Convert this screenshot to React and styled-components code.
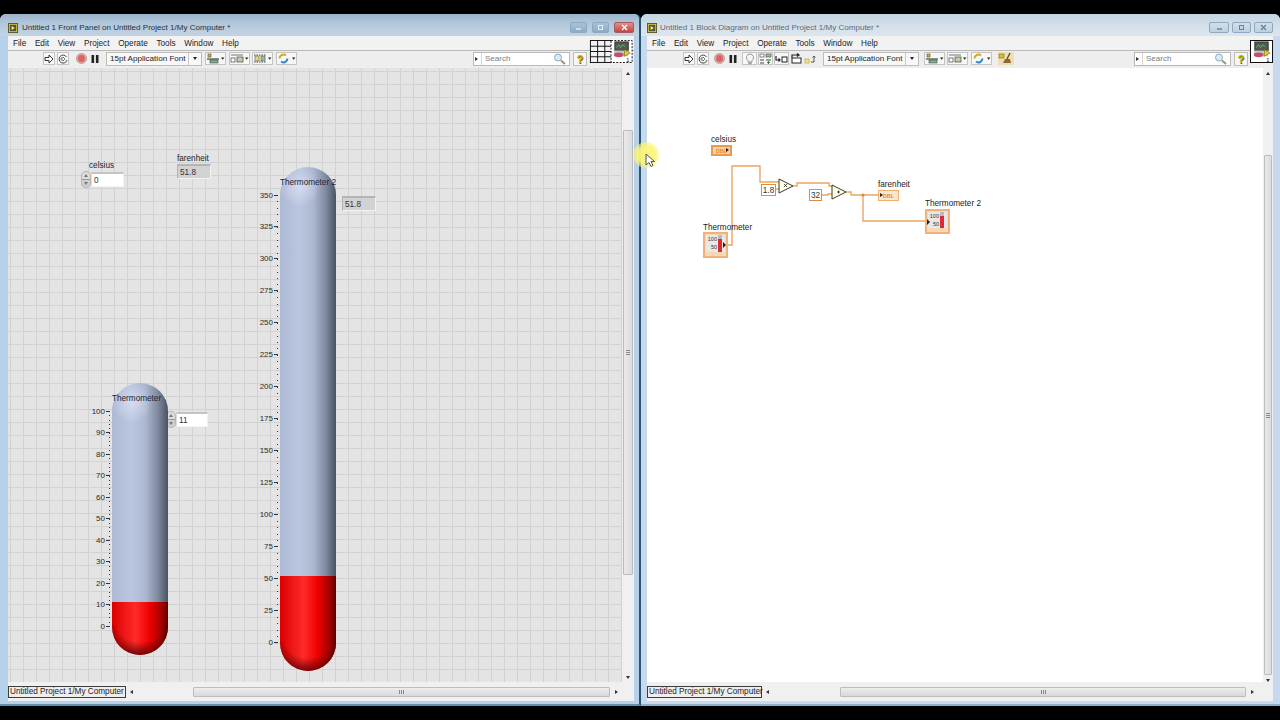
import styled, { createGlobalStyle } from 'styled-components'

const Global = createGlobalStyle`
  html, body {
    margin: 0;
    background: #000;
  }
  body {
    font-family: "Liberation Sans", Arial, sans-serif;
    overflow: hidden;
  }
`

const Screen = styled.div`
  position: relative;
  width: 1280px;
  height: 720px;
  padding: 14px 0;
  box-sizing: border-box;
  background: #000;
  display: flex;
`

const Win = styled.div`
  position: relative;
  width: ${(p) => p.$w}px;
  display: flex;
  flex-direction: column;
  box-sizing: border-box;
  padding: 0 ${(p) => p.$pr}px 3px ${(p) => p.$pl}px;
  border-radius: 6px 6px 0 0;
  border-right: ${(p) => (p.$active ? '2px solid #2c566f' : '0')};
  border-bottom: 2px solid ${(p) => (p.$active ? '#5f93ad' : '#8db0c8')};
  background: ${(p) => (p.$active ? '#b6d2ea' : '#c6d9ee')};
`

const TitleBar = styled.div`
  height: 22px;
  margin: 0 -${(p) => p.$pr}px 0 -${(p) => p.$pl}px;
  padding: 5px ${(p) => p.$pr}px 0 ${(p) => p.$pl}px;
  box-sizing: border-box;
  display: flex;
  align-items: center;
  border-radius: 6px 6px 0 0;
  background: ${(p) =>
    p.$active
      ? 'linear-gradient(#9bb4cb, #b3c8dc 45%, #c2d3e3)'
      : 'linear-gradient(#c3d3e1, #d2dfea 50%, #dce6ee)'};
`

const TitleText = styled.span`
  margin-left: ${(p) => (p.$active ? 4 : 3)}px;
  font-size: 8.05px;
  white-space: nowrap;
  color: ${(p) => (p.$active ? '#26303a' : '#5d6b78')};
`

const WinButtons = styled.div`
  margin-left: auto;
  display: flex;
  gap: ${(p) => (p.$active ? 5 : 3)}px;
`

const WinButton = styled.div`
  width: ${(p) => p.$w}px;
  height: 11px;
  display: flex;
  align-items: center;
  justify-content: center;
  box-sizing: border-box;
  border: 1px solid ${(p) => (p.$close && p.$active ? '#a85a5a' : '#8ea8bf')};
  border-radius: 2px;
  background: ${(p) =>
    p.$close && p.$active
      ? 'linear-gradient(#e0908c, #c8443f)'
      : p.$active
        ? 'linear-gradient(#a9c2d9, #8dabc6)'
        : 'linear-gradient(#d0deea, #bfd1e0)'};
`

const MenuBar = styled.div`
  height: 14px;
  display: flex;
  align-items: center;
  padding-left: 5px;
  gap: 8.7px;
  background: #f2f2f2;
  font-size: 8.2px;
  color: #1c1c1c;
`

const Toolbar = styled.div`
  height: 18px;
  display: flex;
  align-items: center;
  box-sizing: border-box;
  border-top: 1px solid #b9b9b9;
  padding-bottom: 2px;
  background: #eeeeee;
`

const ToolBtn = styled.div`
  width: ${(p) => p.$w || 12}px;
  height: 13px;
  margin-left: ${(p) => p.$ml || 0}px;
  flex: none;
  display: flex;
  align-items: center;
  justify-content: center;
  box-sizing: border-box;
  background: ${(p) => (p.$plain ? 'transparent' : '#f7f7f7')};
  border: ${(p) => (p.$plain ? '0' : '1px solid #c4c4c4')};
`

const FontRing = styled.div`
  width: ${(p) => p.$w}px;
  height: 14px;
  margin-left: ${(p) => p.$ml}px;
  flex: none;
  display: flex;
  align-items: center;
  box-sizing: border-box;
  border: 1px solid #bcbcbc;
  background: #f8f8f8;
  padding-left: 3px;
  font-size: 8.1px;
  color: #222;
  white-space: nowrap;
`

const RingArrow = styled.span`
  margin-left: auto;
  width: 12px;
  height: 100%;
  border-left: 1px solid #c8c8c8;
  display: flex;
  align-items: center;
  justify-content: center;
  &::after {
    content: '';
    border: 2.5px solid transparent;
    border-top: 3px solid #222;
    border-bottom: 0;
  }
`

const SearchBox = styled.div`
  width: 97px;
  height: 14px;
  margin-left: ${(p) => p.$ml}px;
  flex: none;
  display: flex;
  align-items: center;
  box-sizing: border-box;
  border: 1px solid #b8b8b8;
  background: #fff;
  font-size: 8px;
  color: #7a7a7a;
`

const SearchMark = styled.span`
  width: 6px;
  height: 100%;
  margin: 0 3px 0 1px;
  border-right: 1px solid #d4d4d4;
  display: flex;
  align-items: center;
  &::after {
    content: '';
    border: 2px solid transparent;
    border-left: 3px solid #333;
    border-right: 0;
  }
`

const SearchIcon = styled.svg`
  margin-left: auto;
  margin-right: 3px;
`

const HelpBtn = styled.div`
  width: 14px;
  height: 14px;
  margin-left: 3px;
  flex: none;
  display: flex;
  align-items: center;
  justify-content: center;
  box-sizing: border-box;
  border: 1px solid #bdbdbd;
  background: #f6f6f6;
  font: bold 11px "Liberation Sans", sans-serif;
  color: #c9b100;
  text-shadow: 0.5px 0.5px 0 #5b5200;
`

const Body = styled.div`
  flex: 1;
  display: flex;
  min-height: 0;
`

const Canvas = styled.div`
  position: relative;
  flex: 1;
  overflow: hidden;
  background-color: ${(p) => (p.$grid ? '#e4e4e4' : '#fff')};
  background-image: ${(p) =>
    p.$grid
      ? 'linear-gradient(#d2d2d2 1px, transparent 1px), linear-gradient(90deg, #d2d2d2 1px, transparent 1px)'
      : 'none'};
  background-size: 13px 13px;
  background-position: 2px 3px;
`

const VScroll = styled.div`
  width: ${(p) => p.$w}px;
  flex: none;
  display: flex;
  flex-direction: column;
  align-items: stretch;
  background: #f0f0f0;
`

const ScrollUp = styled.div`
  height: 10px;
  flex: none;
  display: flex;
  align-items: center;
  justify-content: center;
  &::after {
    content: '';
    border: 2.5px solid transparent;
    border-bottom: 3px solid #333;
    border-top: 0;
  }
`

const ScrollDown = styled(ScrollUp)`
  margin-top: auto;
  &::after {
    border-top: 3px solid #333;
    border-bottom: 0;
  }
`

const VThumb = styled.div`
  margin: ${(p) => p.$top}px 1px 0;
  height: ${(p) => p.$h}px;
  flex: none;
  border: 1px solid #bbb;
  border-radius: 1px;
  box-sizing: border-box;
  background: linear-gradient(90deg, #e9e9e9, #dcdcdc);
  display: flex;
  align-items: center;
  justify-content: center;
  &::after {
    content: '';
    width: 4px;
    height: 5px;
    background: repeating-linear-gradient(#888 0 1px, transparent 1px 2px);
  }
`

const StatusBar = styled.div`
  height: 19px;
  display: flex;
  align-items: center;
  background: #f0f0f0;
`

const ContextLabel = styled.div`
  width: ${(p) => p.$w}px;
  height: 12px;
  flex: none;
  box-sizing: border-box;
  display: flex;
  align-items: center;
  padding-left: 1px;
  border: 1px solid #3c3c3c;
  background: #eee;
  font-size: 8.2px;
  color: #222;
  white-space: nowrap;
`

const HArrow = styled.div`
  flex: none;
  margin-left: ${(p) => p.$ml}px;
  border: 2.5px solid transparent;
  border-${(p) => (p.$dir === 'left' ? 'right' : 'left')}: 3px solid #333;
  border-${(p) => (p.$dir === 'left' ? 'left' : 'right')}: 0;
`

const HThumb = styled.div`
  width: ${(p) => p.$w}px;
  height: 10px;
  margin-left: ${(p) => p.$ml}px;
  flex: none;
  box-sizing: border-box;
  border: 1px solid #bdbdbd;
  border-radius: 1px;
  background: linear-gradient(#ededed, #d9d9d9);
  display: flex;
  align-items: center;
  justify-content: center;
  &::after {
    content: '';
    width: 5px;
    height: 4px;
    background: repeating-linear-gradient(90deg, #888 0 1px, transparent 1px 2px);
  }
`

const PaneSlot = styled.div`
  position: absolute;
  top: 26px;
  right: ${(p) => p.$right}px;
`

const BlockSvg = styled.svg`
  display: block;
`

/* front panel parts, placed freely on the canvas */
const Item = styled.div`
  position: absolute;
  left: ${(p) => p.$x}px;
  top: ${(p) => p.$y}px;
`

const Caption = styled.div`
  padding-top: 1px;
  font-size: 8.2px;
  line-height: 10px;
  color: #222;
  white-space: nowrap;
`

const NumRow = styled.div`
  display: flex;
  align-items: center;
`

const Spinner = styled.div`
  width: 10px;
  height: 17px;
  flex: none;
  border-radius: 5px;
  background: linear-gradient(#dcdcdc 48%, #999 50%, #cfcfcf 52%);
  box-shadow: inset 0 0 0 1px #b5b5b5;
  display: flex;
  flex-direction: column;
  align-items: center;
  justify-content: space-around;
  &::before, &::after {
    content: '';
    border: 2px solid transparent;
  }
  &::before {
    border-bottom: 3px solid #777;
    border-top: 0;
  }
  &::after {
    border-top: 3px solid #777;
    border-bottom: 0;
  }
`

const NumBox = styled.div`
  width: ${(p) => p.$w || 33}px;
  height: 15px;
  box-sizing: border-box;
  padding-left: 2px;
  display: flex;
  align-items: center;
  font-size: 8.2px;
  color: #333;
  background: ${(p) => (p.$readonly ? '#d2d2d2' : '#fff')};
  border-top: 2px solid ${(p) => (p.$readonly ? '#b4b4b4' : '#c4c4c4')};
  border-left: 1px solid ${(p) => (p.$readonly ? '#b4b4b4' : '#dcdcdc')};
  border-right: 1px solid #f2f2f2;
  border-bottom: 1px solid #f4f4f4;
`

const Tube = styled.div`
  position: relative;
  width: 56px;
  height: ${(p) => p.$h}px;
  border-radius: 28px;
  overflow: hidden;
  background: linear-gradient(90deg, #aeb9d4 0%, #bac6e1 35%, #acb7d0 60%, #7f899f 82%, #4a5263 100%);
  &::before {
    content: '';
    position: absolute;
    inset: 0 0 auto 0;
    height: 44px;
    background: radial-gradient(circle 20px at 20px 20px, rgba(220, 227, 243, 0.75), rgba(200, 210, 232, 0) 100%);
  }
`

const TubeFill = styled.div`
  position: absolute;
  left: 0;
  right: 0;
  bottom: 0;
  height: ${(p) => p.$h}px;
  background: linear-gradient(90deg, #dc0000 0%, #ff2a2a 42%, #ee0000 68%, #9c0000 90%, #5c0000 100%);
  &::after {
    content: '';
    position: absolute;
    left: 0;
    right: 0;
    bottom: 0;
    height: 30px;
    background: radial-gradient(ellipse 40px 30px at 50% 0, rgba(120, 0, 0, 0) 55%, rgba(90, 0, 0, 0.85) 100%);
  }
`

const TubeCaption = styled(Caption)`
  position: absolute;
  top: 10px;
  left: 0;
  color: #1d2333;
`

const Scale = styled.div`
  position: absolute;
  right: 100%;
  top: ${(p) => p.$top}px;
  height: ${(p) => p.$h}px;
  width: 30px;
  &::after {
    content: '';
    position: absolute;
    top: 0;
    bottom: 0;
    right: 2px;
    width: 1.5px;
    background: repeating-linear-gradient(#333 0 1px, transparent 1px ${(p) => p.$minor}px);
  }
`

const Tick = styled.div`
  position: absolute;
  right: 2px;
  top: ${(p) => p.$y}px;
  height: 10px;
  margin-top: -5px;
  display: flex;
  align-items: center;
  gap: 1px;
  font-size: 8px;
  color: #2b2b2b;
  &::after {
    content: '';
    width: 4px;
    height: 1px;
    background: #333;
  }
`

const Thermo = styled(Item)`
  width: 56px;
`

/* block diagram parts */
const WireLayer = styled.svg`
  position: absolute;
  inset: 0;
  width: 100%;
  height: 100%;
`

const Terminal = styled.div`
  position: relative;
  width: ${(p) => p.$w}px;
  height: ${(p) => p.$h}px;
  box-sizing: border-box;
  display: flex;
  align-items: center;
  justify-content: center;
  border: ${(p) => (p.$pale ? '1px solid #f0b070' : '2px solid #ea9a4a')};
  background: ${(p) => (p.$pale ? '#fbe6d0' : '#f8d2a6')};
  font: bold 5.5px "Liberation Sans", sans-serif;
  color: #e98a2e;
  &::after {
    content: '';
    position: absolute;
    top: 50%;
    margin-top: -2.5px;
    ${(p) => (p.$pale ? 'left: 1px' : 'right: 1px')};
    border: 2.5px solid transparent;
    border-left: 3px solid #222;
    border-right: 0;
  }
`

const Constant = styled.div`
  width: ${(p) => p.$w}px;
  height: ${(p) => p.$h}px;
  box-sizing: border-box;
  display: flex;
  align-items: center;
  justify-content: center;
  border: 1.5px solid #e28c36;
  background: #fff;
  font-size: 8.2px;
  color: #333;
`

const MiniThermo = styled.div`
  position: relative;
  width: ${(p) => p.$w}px;
  height: ${(p) => p.$h}px;
  box-sizing: border-box;
  border: 2px solid #f0b27a;
  background: #f9d8b6;
  padding: 1px 1px 4px;
  &::after {
    content: '';
    position: absolute;
    top: 50%;
    margin-top: -3px;
    ${(p) => (p.$input ? 'left: 0' : 'right: 0')};
    border: 3px solid transparent;
    border-left: 3px solid #222;
    border-right: 0;
  }
`

const MiniFace = styled.div`
  height: 100%;
  background: #e8e8e8;
  display: flex;
  justify-content: flex-end;
  padding-right: 3px;
  font: 5.5px/8px "Liberation Sans", sans-serif;
  color: #333;
  gap: 1px;
`

const MiniScale = styled.div`
  text-align: right;
`

const MiniBar = styled.div`
  width: 4px;
  height: 100%;
  background: linear-gradient(#b9b9c4 24%, #e02830 24%);
`

const CursorGlow = styled.div`
  position: absolute;
  left: 633px;
  top: 142px;
  width: 26px;
  height: 26px;
  border-radius: 50%;
  background: radial-gradient(circle, rgba(250, 245, 120, 0.95) 45%, rgba(250, 245, 130, 0) 100%);
`

const CursorSlot = styled.svg`
  position: absolute;
  left: 645px;
  top: 153px;
`

const ViFrameBox = styled.div`
  width: 23px;
  height: 23px;
  box-sizing: border-box;
  border: 1px solid #111;
  background: #fff;
`

const RunIcon = () => (
  <svg width="10" height="10" viewBox="0 0 10 10">
    <path d="M1 3.5h4V1l4 4-4 4V6.5H1z" fill="#fff" stroke="#333" />
  </svg>
)

const RunLoopIcon = () => (
  <svg width="10" height="10" viewBox="0 0 10 10" fill="none" stroke="#444">
    <path d="M8.5 3A4 4 0 1 0 9 6" />
    <path d="M3 4h2V3l2 2-2 2V6H3z" fill="#fff" strokeWidth=".7" />
  </svg>
)

const AbortIcon = () => (
  <svg width="11" height="11" viewBox="0 0 11 11">
    <circle cx="5.5" cy="5.5" r="5" fill="#e9a0a0" stroke="#aaa" />
    <circle cx="5.5" cy="5.5" r="3.4" fill="#e2605f" />
  </svg>
)

const PauseIcon = () => (
  <svg width="10" height="10" viewBox="0 0 10 10" fill="#222">
    <rect x="1.5" y="1" width="2.6" height="8" />
    <rect x="5.9" y="1" width="2.6" height="8" />
  </svg>
)

const BulbIcon = () => (
  <svg width="10" height="12" viewBox="0 0 10 12">
    <path d="M5 1a3.6 3.6 0 0 0-2 6.6V9h4V7.6A3.6 3.6 0 0 0 5 1z" fill="#f4f4f4" stroke="#999" />
    <rect x="3.4" y="9.4" width="3.2" height="1.8" fill="#999" />
  </svg>
)

const MenuIcon = ({ kind }) => (
  <svg width="19" height="11" viewBox="0 0 19 11" fill="none">
    {kind === 'align' && (
      <>
        <rect x="2" y="1" width="3" height="3" fill="#d7b64b" stroke="#444" strokeWidth=".6" />
        <path d="M1 6h12" stroke="#222" />
        <rect x="4" y="7" width="8" height="3" fill="#7fb08a" stroke="#444" strokeWidth=".6" />
      </>
    )}
    {kind === 'dist' && (
      <>
        <path d="M1 2h12" stroke="#777" />
        <rect x="1" y="5" width="4" height="4" fill="#fff" stroke="#444" strokeWidth=".7" />
        <rect x="7" y="4" width="6" height="5" fill="#bcd0a8" stroke="#444" strokeWidth=".7" />
      </>
    )}
    {kind === 'size' && (
      <>
        <path d="M1 2h12M1 9h12" stroke="#444" strokeDasharray="1.5 1" />
        <rect x="2" y="3" width="4" height="5" fill="#eed37a" stroke="#555" strokeWidth=".6" />
        <rect x="8" y="3" width="4" height="5" fill="#9ac48d" stroke="#555" strokeWidth=".6" />
      </>
    )}
    {kind === 'order' && (
      <>
        <path d="M2.5 5.5a4 4 0 0 1 6.5-3" stroke="#d3ab1e" strokeWidth="2" />
        <path d="M10.5 5.5a4 4 0 0 1-6.5 3" stroke="#2f89c6" strokeWidth="2" />
      </>
    )}
    <path d="M15 4.5h3.4l-1.7 2.2z" fill="#222" />
  </svg>
)

const HierIcon = ({ kind }) => (
  <svg width="13" height="12" viewBox="0 0 13 12" fill="none">
    {kind === 'retain' && (
      <>
        <rect x="1" y="1" width="4" height="3" fill="#fff" stroke="#555" strokeWidth=".7" />
        <rect x="7" y="1" width="5" height="3" fill="#9ac48d" stroke="#555" strokeWidth=".7" />
        <path d="M1 7h4M1 10h4M7 7h5" stroke="#444" />
        <path d="M9.5 8v3M8 9.5h3" stroke="#2c8a34" />
      </>
    )}
    {kind === 'into' && (
      <>
        <path d="M1 3v4h4M3.5 5.5 5 7 3.5 8.500" stroke="#222" strokeWidth="1.200" />
        <rect x="7" y="4" width="5" height="5" fill="#fff" stroke="#222" />
      </>
    )}
    {kind === 'over' && (
      <>
        <path d="M2 5V2h7M7 .6 9 2 7 3.400" stroke="#222" strokeWidth="1.200" />
        <rect x="2" y="5" width="9" height="5" fill="#fff" stroke="#222" />
      </>
    )}
    {kind === 'out' && (
      <>
        <rect x="1" y="6" width="4" height="4" fill="#f0e48a" stroke="#bca636" strokeWidth=".7" />
        <path d="M7 9h3V3M8.500 4.500 10 3l1.500 1.500" stroke="#555" />
      </>
    )}
  </svg>
)

const CleanIcon = () => (
  <svg width="16" height="13" viewBox="0 0 16 13">
    <rect x="0" y="0" width="16" height="13" fill="#eee0b6" />
    <rect x="1" y="2" width="5" height="4" fill="#d9bf3e" stroke="#7a6a1a" strokeWidth=".6" />
    <path d="M12 1 9 7" stroke="#6b4a1e" strokeWidth="1.400" />
    <path d="M5 11l2-4h5l1 4z" fill="#8d6a2a" />
  </svg>
)

const LensIcon = () => (
  <SearchIcon width="13" height="12" viewBox="0 0 13 12" fill="none">
    <circle cx="5" cy="4.500" r="3.500" fill="#d8eaf6" stroke="#8fa9bd" />
    <path d="M8 7.500 12 11" stroke="#a08f78" strokeWidth="2" />
  </SearchIcon>
)

const AppIcon = () => (
  <svg width="10" height="10" viewBox="0 0 11 11">
    <rect x=".5" y=".5" width="10" height="10" fill="#d6c84f" stroke="#5b5320" />
    <rect x="2" y="2" width="7" height="7" fill="#57542a" />
    <path d="M4 3.200 7.500 5.500 4 7.800z" fill="#f2eca0" />
  </svg>
)

const WinGlyph = ({ kind, active }) => {
  const c = kind === 'close' && active ? '#fff' : active ? '#e8f0f6' : '#6f8191'
  return (
    <svg width="9" height="7" viewBox="0 0 9 7" fill="none" stroke={c}>
      {kind === 'min' && <path d="M2 5h5" strokeWidth="1.400" />}
      {kind === 'max' && <rect x="2.500" y="1.500" width="4" height="4" />}
      {kind === 'close' && <path d="M2 1l5 5M7 1 2 6" strokeWidth="1.300" />}
    </svg>
  )
}

const ViIcon = ({ size = 21 }) => (
  <BlockSvg width={size} height={size} viewBox="0 0 22 22">
    <rect x="4" y="1" width="14" height="9" fill="#4d5a4c" stroke="#333" />
    <path d="M5.500 7 8 4l2 3 2-3 3 2" stroke="#5fd05f" fill="none" strokeWidth=".8" />
    <rect x="3" y="10" width="15" height="6" fill="#c8c8c8" />
    <ellipse cx="8" cy="14.500" rx="5" ry="2.500" fill="#c2506c" />
    <path d="M14 9l6 3.500L14 16z" fill="#e5cf26" stroke="#6d5f08" strokeWidth=".6" />
    <text x="16" y="21.500" fontSize="6" fontFamily="Liberation Sans" fill="#111">1</text>
  </BlockSvg>
)

const ConnectorPane = () => (
  <BlockSvg width="45" height="23" viewBox="0 0 45 24" fill="none">
    <rect x=".5" y=".5" width="22" height="23" fill="#f2f2f2" stroke="#111" />
    <path d="M.5 6.500h22M.5 12h22M.5 17.500h22M8 .5v23M15.500 .5v23" stroke="#111" />
    <rect x="22" y=".5" width="22" height="23" fill="#fff" stroke="#111" strokeDasharray="2 1.500" />
    <svg x="22" y="1" width="22" height="22" viewBox="0 0 22 22"><ViIcon size={22} /></svg>
  </BlockSvg>
)

const Wires = () => (
  <WireLayer fill="none">
    <g stroke="#eaa566" strokeWidth="1.400">
      <path d="M81 177h4V98h28v16h19" />
      <path d="M129 121h3" />
      <path d="M146 118h4v-3h32v3h3" />
      <path d="M174 127h7v-1h4" />
      <path d="M199 124h5v3h27" />
      <path d="M216 127v26h62" />
    </g>
    <circle cx="216" cy="127" r="1.600" fill="#e08a3a" />
    <g stroke="#3a3a18" strokeWidth="1" fill="#fffff0">
      <path d="M132 111l14 7-14 7z" />
      <path d="M185 117l14 7-14 7z" />
    </g>
    <path d="M137 116l3 3M140 116l-3 3M190 124h3M191.500 122.500v3" stroke="#222" strokeWidth=".8" />
  </WireLayer>
)

const thermoTicks = (values, step) => values.map((v, i) => ({ v, y: i * step }))

const Thermometer = ({ x, y, height, label, fill, values, first, step, minor }) => (
  <Thermo $x={x} $y={y}>
    <Tube $h={height}>
      <TubeFill $h={fill} />
    </Tube>
    <TubeCaption>{label}</TubeCaption>
    <Scale $top={first} $h={step * (values.length - 1)} $minor={minor}>
      {thermoTicks(values, step).map((t) => (
        <Tick key={t.v} $y={t.y}>{t.v}</Tick>
      ))}
    </Scale>
  </Thermo>
)

const MiniThermometer = ({ x, y, w, h, input }) => (
  <Item $x={x} $y={y}>
    <MiniThermo $w={w} $h={h} $input={input}>
      <MiniFace>
        <MiniScale>100<br />50</MiniScale>
        <MiniBar />
      </MiniFace>
    </MiniThermo>
  </Item>
)

const menus = ['File', 'Edit', 'View', 'Project', 'Operate', 'Tools', 'Window', 'Help']

const Chrome = ({ active, title, pl, pr }) => (
  <>
    <TitleBar $active={active} $pl={pl} $pr={pr}>
      <AppIcon />
      <TitleText $active={active}>{title}</TitleText>
      <WinButtons $active={active}>
        <WinButton $w={active ? 17 : 20} $active={active}><WinGlyph kind="min" active={active} /></WinButton>
        <WinButton $w={active ? 17 : 19} $active={active}><WinGlyph kind="max" active={active} /></WinButton>
        <WinButton $w={active ? 20 : 19} $active={active} $close><WinGlyph kind="close" active={active} /></WinButton>
      </WinButtons>
    </TitleBar>
    <MenuBar>
      {menus.map((m) => (
        <span key={m}>{m}</span>
      ))}
    </MenuBar>
  </>
)

const ViFrame = () => (
  <ViFrameBox>
    <ViIcon />
  </ViFrameBox>
)

export default function App() {
  return (
    <Screen>
      <Global />

      <Win $w={641} $pl={8} $pr={5} $active>
        <Chrome active title="Untitled 1 Front Panel on Untitled Project 1/My Computer *" pl={8} pr={5} />
        <Toolbar>
          <ToolBtn $ml={35}><RunIcon /></ToolBtn>
          <ToolBtn $ml={2}><RunLoopIcon /></ToolBtn>
          <ToolBtn $ml={6} $plain><AbortIcon /></ToolBtn>
          <ToolBtn $ml={2} $plain><PauseIcon /></ToolBtn>
          <FontRing $w={96} $ml={5}>15pt Application Font<RingArrow /></FontRing>
          <ToolBtn $w={21} $ml={3}><MenuIcon kind="align" /></ToolBtn>
          <ToolBtn $w={21} $ml={3}><MenuIcon kind="dist" /></ToolBtn>
          <ToolBtn $w={21} $ml={2}><MenuIcon kind="size" /></ToolBtn>
          <ToolBtn $w={21} $ml={3}><MenuIcon kind="order" /></ToolBtn>
          <SearchBox $ml={176}><SearchMark />Search<LensIcon /></SearchBox>
          <HelpBtn>?</HelpBtn>
        </Toolbar>
        <Body>
          <Canvas $grid>
            <Item $x={81} $y={92}><Caption>celsius</Caption></Item>
            <Item $x={73} $y={103}>
              <NumRow><Spinner /><NumBox>0</NumBox></NumRow>
            </Item>
            <Item $x={169} $y={85}><Caption>farenheit</Caption></Item>
            <Item $x={169} $y={96}><NumBox $readonly $w={34}>51.8</NumBox></Item>
            <Item $x={334} $y={128}><NumBox $readonly $w={34}>51.8</NumBox></Item>
            <Item $x={158} $y={343}>
              <NumRow><Spinner /><NumBox $w={32}>11</NumBox></NumRow>
            </Item>
            <Thermometer
              x={104}
              y={315}
              height={272}
              fill={53}
              label="Thermometer"
              values={[100, 90, 80, 70, 60, 50, 40, 30, 20, 10, 0]}
              first={28}
              step={21.5}
              minor={4.3}
            />
            <Thermometer
              x={272}
              y={99}
              height={504}
              fill={95}
              label="Thermometer 2"
              values={[350, 325, 300, 275, 250, 225, 200, 175, 150, 125, 100, 75, 50, 25, 0]}
              first={28}
              step={31.93}
              minor={6.39}
            />
          </Canvas>
          <VScroll $w={12}>
            <ScrollUp />
            <VThumb $top={52} $h={445} />
            <ScrollDown />
          </VScroll>
        </Body>
        <StatusBar>
          <ContextLabel $w={118}>Untitled Project 1/My Computer</ContextLabel>
          <HArrow $ml={4} $dir="left" />
          <HThumb $w={417} $ml={60} />
          <HArrow $ml={5} $dir="right" />
        </StatusBar>
        <PaneSlot $right={5}><ConnectorPane /></PaneSlot>
      </Win>

      <Win $w={639} $pl={6} $pr={7}>
        <Chrome active={false} title="Untitled 1 Block Diagram on Untitled Project 1/My Computer *" pl={6} pr={7} />
        <Toolbar>
          <ToolBtn $ml={36}><RunIcon /></ToolBtn>
          <ToolBtn $ml={2}><RunLoopIcon /></ToolBtn>
          <ToolBtn $ml={4} $plain><AbortIcon /></ToolBtn>
          <ToolBtn $ml={2} $plain><PauseIcon /></ToolBtn>
          <ToolBtn $ml={3} $w={15}><BulbIcon /></ToolBtn>
          <ToolBtn $ml={1} $w={15}><HierIcon kind="retain" /></ToolBtn>
          <ToolBtn $ml={1} $w={15}><HierIcon kind="into" /></ToolBtn>
          <ToolBtn $w={14} $plain><HierIcon kind="over" /></ToolBtn>
          <ToolBtn $w={14} $plain><HierIcon kind="out" /></ToolBtn>
          <FontRing $w={96} $ml={6}>15pt Application Font<RingArrow /></FontRing>
          <ToolBtn $w={21} $ml={5}><MenuIcon kind="align" /></ToolBtn>
          <ToolBtn $w={21} $ml={2}><MenuIcon kind="dist" /></ToolBtn>
          <ToolBtn $w={21} $ml={3}><MenuIcon kind="order" /></ToolBtn>
          <ToolBtn $w={18} $ml={5} $plain><CleanIcon /></ToolBtn>
          <SearchBox $ml={119}><SearchMark />Search<LensIcon /></SearchBox>
          <HelpBtn>?</HelpBtn>
        </Toolbar>
        <Body>
          <Canvas>
            <Wires />
            <Item $x={64} $y={66}><Caption>celsius</Caption></Item>
            <Item $x={64} $y={77}><Terminal $w={21} $h={11}>DBL</Terminal></Item>
            <Item $x={231} $y={111}><Caption>farenheit</Caption></Item>
            <Item $x={231} $y={122}><Terminal $w={21} $h={11} $pale>DBL</Terminal></Item>
            <Item $x={114} $y={116}><Constant $w={15} $h={12}>1.8</Constant></Item>
            <Item $x={162} $y={121}><Constant $w={13} $h={12}>32</Constant></Item>
            <Item $x={56} $y={154}><Caption>Thermometer</Caption></Item>
            <MiniThermometer x={56} y={164} w={25} h={26} />
            <Item $x={278} $y={130}><Caption>Thermometer 2</Caption></Item>
            <MiniThermometer x={278} y={141} w={25} h={25} input />
          </Canvas>
          <VScroll $w={10}>
            <ScrollUp />
            <VThumb $top={77} $h={520} />
            <ScrollDown />
          </VScroll>
        </Body>
        <StatusBar>
          <ContextLabel $w={115}>Untitled Project 1/My Computer</ContextLabel>
          <HArrow $ml={4} $dir="left" />
          <HThumb $w={406} $ml={71} />
          <HArrow $ml={5} $dir="right" />
        </StatusBar>
        <PaneSlot $right={7}><ViFrame /></PaneSlot>
      </Win>

      <CursorGlow />
      <CursorSlot width="10" height="15" viewBox="0 0 10 15">
        <path d="M1 1v11l3-2.500 2 4 2-1-2-4h3.500z" fill="#fff" stroke="#555" />
      </CursorSlot>
    </Screen>
  )
}
